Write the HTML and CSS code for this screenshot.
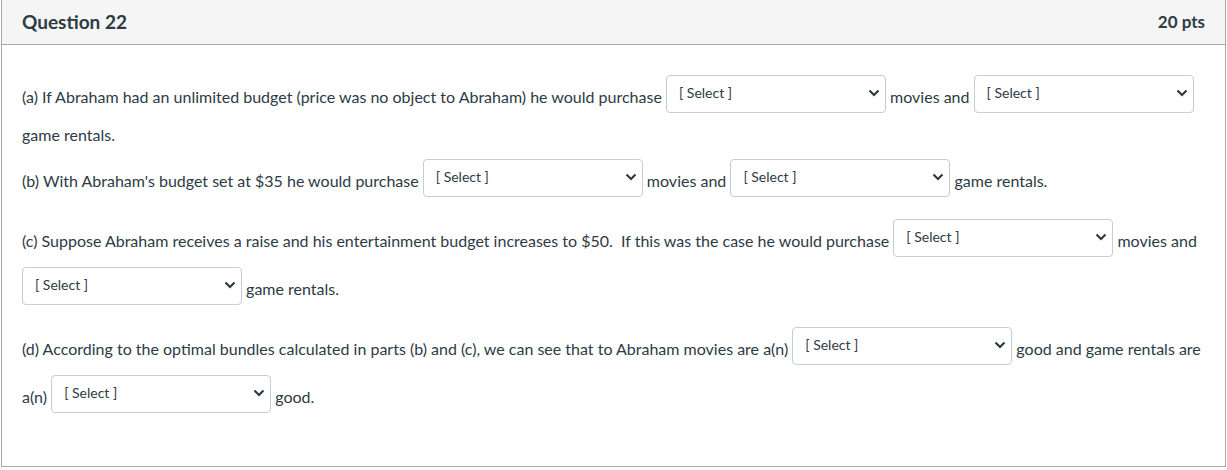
FILE: index.html
```html
<!DOCTYPE html>
<html lang="en">
<head>
    <meta charset="UTF-8">
    <meta name="viewport" content="width=device-width, initial-scale=1.0">
    <title>Question 22</title>
    <link rel="stylesheet" href="styles.css">
</head>
<body>
    <div class="question">
        <div class="question-header">
            <span class="question-name">Question 22</span>
            <span class="question-points">20 pts</span>
        </div>

        <div class="question-text">
            <p>(a) If Abraham had an unlimited budget (price was no object to Abraham) he would purchase
                <span class="dropdown"><select class="answer"><option>[ Select ]</option></select><svg class="chevron" viewBox="0 0 12 8"><polyline points="1.5,1.5 6,6 10.5,1.5"/></svg></span>
                movies and
                <span class="dropdown"><select class="answer"><option>[ Select ]</option></select><svg class="chevron" viewBox="0 0 12 8"><polyline points="1.5,1.5 6,6 10.5,1.5"/></svg></span>
                game rentals.</p>

            <p>(b) With Abraham's budget set at $35 he would purchase
                <span class="dropdown"><select class="answer"><option>[ Select ]</option></select><svg class="chevron" viewBox="0 0 12 8"><polyline points="1.5,1.5 6,6 10.5,1.5"/></svg></span>
                movies and
                <span class="dropdown"><select class="answer"><option>[ Select ]</option></select><svg class="chevron" viewBox="0 0 12 8"><polyline points="1.5,1.5 6,6 10.5,1.5"/></svg></span>
                game rentals.</p>

            <p>(c) Suppose Abraham receives a raise and his entertainment budget increases to $50.&nbsp; If this was the case he would purchase
                <span class="dropdown"><select class="answer"><option>[ Select ]</option></select><svg class="chevron" viewBox="0 0 12 8"><polyline points="1.5,1.5 6,6 10.5,1.5"/></svg></span>
                movies and
                <span class="dropdown"><select class="answer"><option>[ Select ]</option></select><svg class="chevron" viewBox="0 0 12 8"><polyline points="1.5,1.5 6,6 10.5,1.5"/></svg></span>
                game rentals.</p>

            <p>(d) According to the optimal bundles calculated in parts (b) and (c), we can see that to Abraham movies are a(n)
                <span class="dropdown"><select class="answer"><option>[ Select ]</option></select><svg class="chevron" viewBox="0 0 12 8"><polyline points="1.5,1.5 6,6 10.5,1.5"/></svg></span>
                good and game rentals are a(n)
                <span class="dropdown"><select class="answer"><option>[ Select ]</option></select><svg class="chevron" viewBox="0 0 12 8"><polyline points="1.5,1.5 6,6 10.5,1.5"/></svg></span>
                good.</p>
        </div>
    </div>
</body>
</html>
```

FILE: styles.css
```css
body {
    margin: 0;
    font-family: Lato, 'Noto Sans', Arial, sans-serif;
    font-size: 16px;
    line-height: 24px;
    color: #2d3b45;
    background: #fff;
}
.question {
    margin: -1px 1px 0 1px;
    border: 1px solid #a8a8a8;
    height: 468px;
    box-sizing: border-box;
}
.question-header {
    display: flex;
    justify-content: space-between;
    align-items: center;
    height: 44px;
    padding: 0 20px;
    background-color: #f5f5f5;
    border-bottom: 1px solid #a8a8a8;
    font-weight: bold;
}
.question-name {
    font-size: 19px;
}
.question-points {
    font-size: 17px;
}
.question-text {
    padding: 18px 20px 30px 20px;
}
.question-text p {
    margin: 12px 0;
}
.dropdown {
    position: relative;
    display: inline-block;
    vertical-align: middle;
    margin-bottom: 10px;
    line-height: normal;
}
.answer {
    appearance: none;
    -webkit-appearance: none;
    width: 220px;
    height: 38px;
    padding: 0 30px 4px 12px;
    border: 1px solid #c7cdd1;
    border-radius: 4px;
    background: #fff;
    font-family: Lato, 'Noto Sans', Arial, sans-serif;
    font-size: 14px;
    color: #2d3b45;
    display: block;
}
.chevron {
    position: absolute;
    right: 6px;
    top: 14px;
    width: 12px;
    height: 8px;
    fill: none;
    stroke: #2d3b45;
    stroke-width: 2.2;
    pointer-events: none;
}
```
